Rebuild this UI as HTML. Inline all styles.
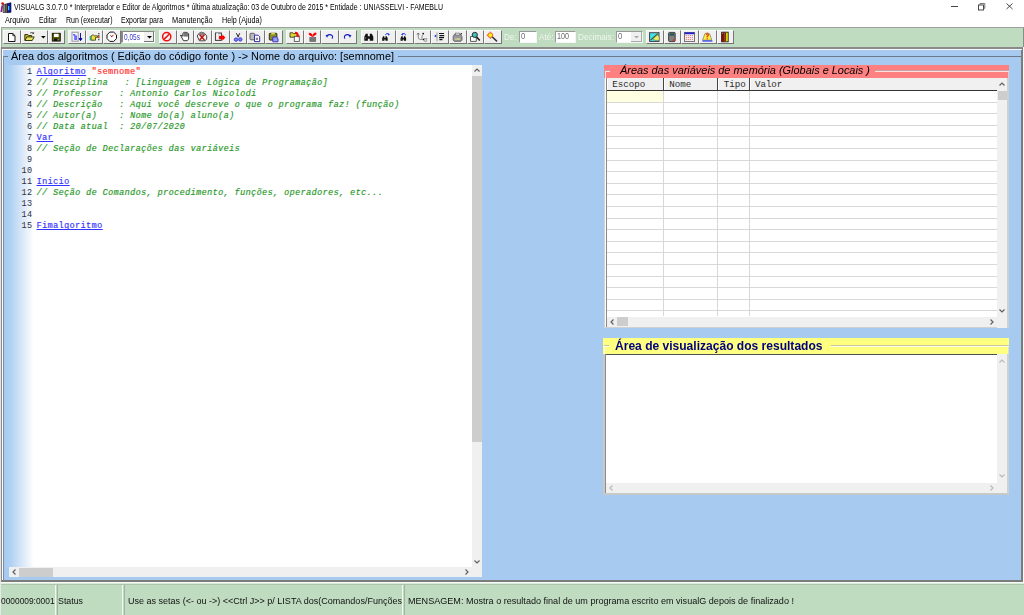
<!DOCTYPE html><html><head><meta charset="utf-8"><style>
html,body{margin:0;padding:0;width:1024px;height:615px;overflow:hidden;background:#fff;position:relative}
.t{position:absolute;white-space:pre;transform-origin:0 0}
.b{position:absolute;box-sizing:border-box}
svg{position:absolute;overflow:visible}
</style></head><body>
<svg style="left:0px;top:1px" width="12" height="12" viewBox="0 0 12 12">
<path d="M2.2 4.5L1.2 11" stroke="#901090" stroke-width="1.6"/><circle cx="2.6" cy="2.6" r="1.4" fill="#e01010"/>
<path d="M3 3.6l2.8-.5v8.4H3z" fill="#8a8a8a" stroke="#222" stroke-width=".6"/>
<path d="M5.6 3.1l1.8-.4v8.8H5.6z" fill="#807820" stroke="#222" stroke-width=".6"/>
<path d="M7.4 2.6l3.6-.9v9.6l-3.6.4z" fill="#1010c0" stroke="#111" stroke-width=".6"/><rect x="8.1" y="5" width="1.1" height="4.2" fill="#30f0ff"/>
</svg>
<div class="t" style="left:14px;top:2.60px;font-family:'Liberation Sans', sans-serif;font-size:8.5px;line-height:8.5px;color:#000;font-weight:normal;font-style:normal;transform:scaleX(0.8234165067178503);">VISUALG 3.0.7.0 * Interpretador e Editor de Algoritmos * última atualização: 03 de Outubro de 2015 * Entidade : UNIASSELVI - FAMEBLU</div>
<div class="b" style="left:951px;top:6px;width:6.5px;height:1px;background:#444"></div>
<svg style="left:977px;top:2px" width="10" height="8" viewBox="0 0 10 8"><rect x="1.5" y="3" width="5" height="5" fill="none" stroke="#333" stroke-width=".9"/><path d="M3 3V1.5h4.8v4.8H6.5" fill="none" stroke="#666" stroke-width=".9"/></svg>
<svg style="left:1006px;top:3px" width="8" height="7" viewBox="0 0 8 7"><path d="M0.5 0.5L6.5 6M6.5 0.5L0.5 6" stroke="#333" stroke-width=".9" fill="none"/></svg>
<div class="t" style="left:4.8px;top:15.50px;font-family:'Liberation Sans', sans-serif;font-size:8.5px;line-height:8.5px;color:#000;font-weight:normal;font-style:normal;transform:scaleX(0.8532778355879294);">Arquivo</div>
<div class="t" style="left:39px;top:15.50px;font-family:'Liberation Sans', sans-serif;font-size:8.5px;line-height:8.5px;color:#000;font-weight:normal;font-style:normal;transform:scaleX(0.7875787578757876);">Editar</div>
<div class="t" style="left:65.7px;top:15.50px;font-family:'Liberation Sans', sans-serif;font-size:8.5px;line-height:8.5px;color:#000;font-weight:normal;font-style:normal;transform:scaleX(0.8271077908217717);">Run (executar)</div>
<div class="t" style="left:121px;top:15.50px;font-family:'Liberation Sans', sans-serif;font-size:8.5px;line-height:8.5px;color:#000;font-weight:normal;font-style:normal;transform:scaleX(0.8174757281553399);">Exportar para</div>
<div class="t" style="left:172px;top:15.50px;font-family:'Liberation Sans', sans-serif;font-size:8.5px;line-height:8.5px;color:#000;font-weight:normal;font-style:normal;transform:scaleX(0.8696581196581198);">Manutenção</div>
<div class="t" style="left:222px;top:15.50px;font-family:'Liberation Sans', sans-serif;font-size:8.5px;line-height:8.5px;color:#000;font-weight:normal;font-style:normal;transform:scaleX(0.8444444444444444);">Help (Ajuda)</div>
<div class="b" style="left:1px;top:27px;width:1023px;height:20px;background:#c0dcc0;border-top:1px solid #a0a0a0;border-left:1px solid #a0a0a0;border-right:1px solid #8c8c8c"></div>
<div class="b" style="left:3px;top:30px;width:17.67px;height:14px;background:#f0f0f0;border-right:1px solid #777;border-bottom:1px solid #777;border-left:1px solid #fafafa;border-top:1px solid #fafafa"></div>
<div class="b" style="left:47.7px;top:30px;width:17.67px;height:14px;background:#f0f0f0;border-right:1px solid #777;border-bottom:1px solid #777;border-left:1px solid #fafafa;border-top:1px solid #fafafa"></div>
<div class="b" style="left:20.67px;top:30px;width:27px;height:14px;background:#f0f0f0;border-right:1px solid #777;border-bottom:1px solid #777;border-left:1px solid #fafafa;border-top:1px solid #fafafa"></div>
<div class="b" style="left:68.0px;top:30px;width:17.67px;height:14px;background:#f0f0f0;border-right:1px solid #777;border-bottom:1px solid #777;border-left:1px solid #fafafa;border-top:1px solid #fafafa"></div>
<div class="b" style="left:85.67px;top:30px;width:17.67px;height:14px;background:#f0f0f0;border-right:1px solid #777;border-bottom:1px solid #777;border-left:1px solid #fafafa;border-top:1px solid #fafafa"></div>
<div class="b" style="left:103.34px;top:30px;width:17.67px;height:14px;background:#f0f0f0;border-right:1px solid #777;border-bottom:1px solid #777;border-left:1px solid #fafafa;border-top:1px solid #fafafa"></div>
<div class="b" style="left:159.0px;top:30px;width:17.67px;height:14px;background:#f0f0f0;border-right:1px solid #777;border-bottom:1px solid #777;border-left:1px solid #fafafa;border-top:1px solid #fafafa"></div>
<div class="b" style="left:176.67000000000002px;top:30px;width:17.67px;height:14px;background:#f0f0f0;border-right:1px solid #777;border-bottom:1px solid #777;border-left:1px solid #fafafa;border-top:1px solid #fafafa"></div>
<div class="b" style="left:194.34px;top:30px;width:17.67px;height:14px;background:#f0f0f0;border-right:1px solid #777;border-bottom:1px solid #777;border-left:1px solid #fafafa;border-top:1px solid #fafafa"></div>
<div class="b" style="left:212.01px;top:30px;width:17.67px;height:14px;background:#f0f0f0;border-right:1px solid #777;border-bottom:1px solid #777;border-left:1px solid #fafafa;border-top:1px solid #fafafa"></div>
<div class="b" style="left:229.68px;top:30px;width:17.67px;height:14px;background:#f0f0f0;border-right:1px solid #777;border-bottom:1px solid #777;border-left:1px solid #fafafa;border-top:1px solid #fafafa"></div>
<div class="b" style="left:247.35000000000002px;top:30px;width:17.67px;height:14px;background:#f0f0f0;border-right:1px solid #777;border-bottom:1px solid #777;border-left:1px solid #fafafa;border-top:1px solid #fafafa"></div>
<div class="b" style="left:265.02px;top:30px;width:17.67px;height:14px;background:#f0f0f0;border-right:1px solid #777;border-bottom:1px solid #777;border-left:1px solid #fafafa;border-top:1px solid #fafafa"></div>
<div class="b" style="left:286.0px;top:30px;width:17.67px;height:14px;background:#f0f0f0;border-right:1px solid #777;border-bottom:1px solid #777;border-left:1px solid #fafafa;border-top:1px solid #fafafa"></div>
<div class="b" style="left:303.67px;top:30px;width:17.67px;height:14px;background:#f0f0f0;border-right:1px solid #777;border-bottom:1px solid #777;border-left:1px solid #fafafa;border-top:1px solid #fafafa"></div>
<div class="b" style="left:321.34000000000003px;top:30px;width:17.67px;height:14px;background:#f0f0f0;border-right:1px solid #777;border-bottom:1px solid #777;border-left:1px solid #fafafa;border-top:1px solid #fafafa"></div>
<div class="b" style="left:339.01px;top:30px;width:17.67px;height:14px;background:#f0f0f0;border-right:1px solid #777;border-bottom:1px solid #777;border-left:1px solid #fafafa;border-top:1px solid #fafafa"></div>
<div class="b" style="left:360.67px;top:30px;width:17.67px;height:14px;background:#f0f0f0;border-right:1px solid #777;border-bottom:1px solid #777;border-left:1px solid #fafafa;border-top:1px solid #fafafa"></div>
<div class="b" style="left:378.34000000000003px;top:30px;width:17.67px;height:14px;background:#f0f0f0;border-right:1px solid #777;border-bottom:1px solid #777;border-left:1px solid #fafafa;border-top:1px solid #fafafa"></div>
<div class="b" style="left:396.01px;top:30px;width:17.67px;height:14px;background:#f0f0f0;border-right:1px solid #777;border-bottom:1px solid #777;border-left:1px solid #fafafa;border-top:1px solid #fafafa"></div>
<div class="b" style="left:413.68px;top:30px;width:17.67px;height:14px;background:#f0f0f0;border-right:1px solid #777;border-bottom:1px solid #777;border-left:1px solid #fafafa;border-top:1px solid #fafafa"></div>
<div class="b" style="left:431.35px;top:30px;width:17.67px;height:14px;background:#f0f0f0;border-right:1px solid #777;border-bottom:1px solid #777;border-left:1px solid #fafafa;border-top:1px solid #fafafa"></div>
<div class="b" style="left:449.02000000000004px;top:30px;width:17.67px;height:14px;background:#f0f0f0;border-right:1px solid #777;border-bottom:1px solid #777;border-left:1px solid #fafafa;border-top:1px solid #fafafa"></div>
<div class="b" style="left:466.69000000000005px;top:30px;width:17.67px;height:14px;background:#f0f0f0;border-right:1px solid #777;border-bottom:1px solid #777;border-left:1px solid #fafafa;border-top:1px solid #fafafa"></div>
<div class="b" style="left:484.36px;top:30px;width:17.67px;height:14px;background:#f0f0f0;border-right:1px solid #777;border-bottom:1px solid #777;border-left:1px solid #fafafa;border-top:1px solid #fafafa"></div>
<div class="b" style="left:646.0px;top:30px;width:17.67px;height:14px;background:#f0f0f0;border-right:1px solid #777;border-bottom:1px solid #777;border-left:1px solid #fafafa;border-top:1px solid #fafafa"></div>
<div class="b" style="left:663.67px;top:30px;width:17.67px;height:14px;background:#f0f0f0;border-right:1px solid #777;border-bottom:1px solid #777;border-left:1px solid #fafafa;border-top:1px solid #fafafa"></div>
<div class="b" style="left:681.34px;top:30px;width:17.67px;height:14px;background:#f0f0f0;border-right:1px solid #777;border-bottom:1px solid #777;border-left:1px solid #fafafa;border-top:1px solid #fafafa"></div>
<div class="b" style="left:699.01px;top:30px;width:17.67px;height:14px;background:#f0f0f0;border-right:1px solid #777;border-bottom:1px solid #777;border-left:1px solid #fafafa;border-top:1px solid #fafafa"></div>
<div class="b" style="left:716.6800000000001px;top:30px;width:17.67px;height:14px;background:#f0f0f0;border-right:1px solid #777;border-bottom:1px solid #777;border-left:1px solid #fafafa;border-top:1px solid #fafafa"></div>
<svg style="left:3px;top:30px" width="17" height="13" viewBox="0 0 17 13"><path d="M5.5 3.5h4.3l2.2 2.2v5.8H5.5z" fill="#fff" stroke="#111" stroke-width="1"/><path d="M9.8 3.5v2.2H12" fill="none" stroke="#111" stroke-width=".8"/></svg>
<svg style="left:20.67px;top:30px" width="17" height="13" viewBox="0 0 17 13"><path d="M3.8 4.5h3l.8 1h3v4.8H3.8z" fill="#b8b030" stroke="#303000" stroke-width=".9"/><path d="M4 10.5l1.8-3.6h7.4l-2 3.6z" fill="#e8e060" stroke="#303000" stroke-width=".9"/><path d="M9 3.2q2-1.6 3.6.2M12.6 2.2v1.4h-1.3" stroke="#333" fill="none" stroke-width=".8"/></svg>
<svg style="left:40.8px;top:35.6px" width="6" height="3" viewBox="0 0 6 3"><path d="M0 0h4.6l-2.3 2.6z" fill="#000"/></svg>
<svg style="left:47.7px;top:30px" width="17" height="13" viewBox="0 0 17 13"><rect x="4.3" y="3.3" width="8" height="7.8" fill="#606000" stroke="#151500" stroke-width=".9"/><rect x="6" y="3.8" width="4.6" height="3.2" fill="#fff"/><rect x="6" y="8.4" width="4.8" height="2.6" fill="#111"/><rect x="9.6" y="8.8" width="1" height="1.6" fill="#bbb"/></svg>
<svg style="left:68px;top:30px" width="17" height="13" viewBox="0 0 17 13"><rect x="4" y="2.2" width="6.2" height="9" fill="#f4f4ff" stroke="#999" stroke-width="1"/><path d="M5 4h2l.6 1.6h1.4v4.4H6.2V6.2L5 5z" fill="#6a6aff"/><path d="M12.5 3v7.3M11 8.6l1.5 2 1.5-2z" stroke="#0000a0" fill="#0000a0" stroke-width=".9"/></svg>
<svg style="left:85.67px;top:30px" width="17" height="13" viewBox="0 0 17 13"><rect x="3.4" y="6" width="1.6" height="4.4" fill="#40e0f0"/><path d="M5 6l1.5-1h1.2l.8.8h3v1.6H9.5v2.8H5z" fill="#e8e040" stroke="#202000" stroke-width=".7"/><path d="M12.8 3v8" stroke="#222" stroke-width="1.1" stroke-dasharray="1.2 .8"/><circle cx="12.8" cy="6.8" r=".9" fill="#ff4040"/></svg>
<svg style="left:103.33px;top:30px" width="17" height="13" viewBox="0 0 17 13"><path d="M6.8 2.1h3.9l2.8 2.8v3.7l-2.8 2.8H6.8L4 8.6V4.9z" fill="#fff" stroke="#111" stroke-width="1"/><path d="M8.8 6.5l1.8-1.8" stroke="#e00" stroke-width="1"/><path d="M8.8 6.5L7 4.9" stroke="#444" stroke-width=".7"/><circle cx="8.8" cy="6.6" r=".7" fill="#a00"/></svg>
<div class="b" style="left:121px;top:31px;width:34px;height:12px;background:#fff;border-top:1px solid #888;border-left:2px solid #888;border-right:1px solid #fff;border-bottom:1px solid #fff"></div>
<div class="b" style="left:144px;top:32px;width:10px;height:10px;background:#f0f0f0;border-right:1px solid #777;border-bottom:1px solid #777"></div>
<svg style="left:147px;top:36px" width="5" height="3" viewBox="0 0 5 3"><path d="M0 0h5l-2.5 2.5z" fill="#000"/></svg>
<div class="t" style="left:124px;top:32.16px;font-family:'Liberation Sans', sans-serif;font-size:9.5px;line-height:9.5px;color:#3838c0;font-weight:normal;font-style:normal;transform:scaleX(0.6837565998518765);">0,05s</div>
<svg style="left:159px;top:30px" width="17" height="13" viewBox="0 0 17 13"><circle cx="7.7" cy="6.7" r="4.1" fill="none" stroke="#f01010" stroke-width="1.5"/><path d="M5 9.4l5.4-5.4" stroke="#f01010" stroke-width="1.5"/></svg>
<svg style="left:176.67px;top:30px" width="17" height="13" viewBox="0 0 17 13"><path d="M3.5 5.2l2.3.9V3.4l1.3-1h3l1.5 1.5v5.3l-1.4 1.5H6.5z" fill="#fff" stroke="#222" stroke-width=".9"/><rect x="6.4" y="2.6" width="4.6" height="4" fill="#777"/></svg>
<svg style="left:194.33px;top:30px" width="17" height="13" viewBox="0 0 17 13"><path d="M3.2 6l2-2.8 2.4-1 2.8 1 2.3 2.6v3.2l-1.6 1.8H5.4z" fill="#f4f4f4" stroke="#333" stroke-width=".9"/><rect x="6" y="2.6" width="4" height="3" fill="#888"/><path d="M5.4 4.6l5 5.4M10.6 4.6l-5 5.4" stroke="#c01010" stroke-width="1.4"/></svg>
<svg style="left:212px;top:30px" width="17" height="13" viewBox="0 0 17 13"><rect x="3.4" y="3" width="6" height="7.4" fill="#ddd" stroke="#333" stroke-width=".9"/><rect x="4.6" y="3" width="1.2" height="6" fill="#fff"/><path d="M7 6h3.4V4.4l3 3.2-3 3.2V9.2H7z" fill="#f00"/></svg>
<svg style="left:229.67px;top:30px" width="17" height="13" viewBox="0 0 17 13"><path d="M6.3 3.2l2.2 4M9.8 3.2l-2 4" stroke="#222" stroke-width="1"/><circle cx="6" cy="9.6" r="1.7" fill="#8080ff" stroke="#3030c0" stroke-width=".9"/><circle cx="10.3" cy="9.4" r="1.7" fill="#8080ff" stroke="#3030c0" stroke-width=".9"/></svg>
<svg style="left:247.33px;top:30px" width="17" height="13" viewBox="0 0 17 13"><rect x="3" y="3.3" width="4.6" height="6.5" rx="1" fill="#bbb" stroke="#555" stroke-width=".9"/><path d="M7.5 5.2h3.6l1.6 1.6v4.8H7.5z" fill="#fff" stroke="#3030b0" stroke-width="1"/><rect x="8.8" y="7.6" width="2.2" height="2.4" fill="#888"/></svg>
<svg style="left:265px;top:30px" width="17" height="13" viewBox="0 0 17 13"><rect x="4.3" y="3.3" width="7.6" height="6.8" rx=".8" fill="#8a8a30" stroke="#202000" stroke-width=".9"/><rect x="6.2" y="2.8" width="3.6" height="1.6" fill="#e0e040"/><path d="M7.8 7h3.6l1.6 1.6v3.2H7.8z" fill="#9a9aff" stroke="#3030b0" stroke-width=".9"/></svg>
<svg style="left:286px;top:30px" width="17" height="13" viewBox="0 0 17 13"><path d="M4 2.8h3l.6.8h3.4v3.6H4z" fill="#d8d840" stroke="#303000" stroke-width=".8"/><rect x="8.3" y="6.4" width="5" height="5" fill="#fff" stroke="#555" stroke-width=".9"/><path d="M9 2.6q3 .2 3 3" stroke="#f00" stroke-width="1.5" fill="none"/><path d="M10.4 5.2l1.7 2.4 1.7-2.4z" fill="#f00"/></svg>
<svg style="left:303.67px;top:30px" width="17" height="13" viewBox="0 0 17 13"><rect x="5.8" y="7.4" width="6" height="4.2" fill="#777" stroke="#555" stroke-width=".5"/><ellipse cx="6.6" cy="4.6" rx="2.2" ry="1.3" transform="rotate(40 6.6 4.6)" fill="#f00"/><ellipse cx="10.6" cy="4.2" rx="2.2" ry="1.3" transform="rotate(-35 10.6 4.2)" fill="#f00"/><path d="M8.2 6.8l.6-1.2.6 1.2" fill="#f00" stroke="#f00" stroke-width=".8"/></svg>
<svg style="left:321.33px;top:30px" width="17" height="13" viewBox="0 0 17 13"><path d="M6.2 5.6q2.5-2 5 0 1 1.5-.2 3.2" stroke="#1020c0" stroke-width="1.1" fill="none"/><path d="M4.5 5.2l3.2-.6-1.6 3.2z" fill="#1020c0"/></svg>
<svg style="left:339px;top:30px" width="17" height="13" viewBox="0 0 17 13"><path d="M10.8 5.6q-2.5-2-5 0-1 1.5.2 3.2" stroke="#1020c0" stroke-width="1.1" fill="none"/><path d="M12.5 5.2l-3.2-.6 1.6 3.2z" fill="#1020c0"/></svg>
<svg style="left:360.67px;top:30px" width="17" height="13" viewBox="0 0 17 13"><g transform="translate(1.8 3.2) scale(1.0)"><path d="M1.5 3.5l1.5-3h2v2.5h2V.5h2l1.5 3v4h-3.6V5.5H5.1v2H1.5z" fill="#111"/><rect x="2.2" y="4" width="1.2" height="1.6" fill="#666"/></g></svg>
<svg style="left:378.33px;top:30px" width="17" height="13" viewBox="0 0 17 13"><g transform="translate(3.2 6.0) scale(0.62)"><path d="M1.5 3.5l1.5-3h2v2.5h2V.5h2l1.5 3v4h-3.6V5.5H5.1v2H1.5z" fill="#111"/><rect x="2.2" y="4" width="1.2" height="1.6" fill="#666"/></g><path d="M7.2 5q1.5-2.6 3.8-.8" stroke="#1030e0" stroke-width="1" fill="none"/><path d="M10.2 3.2l1.8 1.6-2 .6z" fill="#1030e0"/></svg>
<svg style="left:396px;top:30px" width="17" height="13" viewBox="0 0 17 13"><g transform="translate(3.6 6.0) scale(0.62)"><path d="M1.5 3.5l1.5-3h2v2.5h2V.5h2l1.5 3v4h-3.6V5.5H5.1v2H1.5z" fill="#111"/><rect x="2.2" y="4" width="1.2" height="1.6" fill="#666"/></g><path d="M9.8 5q-1.5-2.6-3.8-.8" stroke="#1030e0" stroke-width="1" fill="none"/><path d="M6.8 3.2l-1.8 1.6 2 .6z" fill="#1030e0"/></svg>
<svg style="left:413.67px;top:30px" width="17" height="13" viewBox="0 0 17 13"><path d="M4.2 6.5V3.2M3 4.4l1.2-1.4 1.2 1.4" stroke="#555" stroke-width=".8" fill="none"/><circle cx="9.2" cy="3.6" r=".9" fill="#111"/><path d="M9 4.5l-1 1.5v3M4.2 6.5q0 3 2 3h3" stroke="#666" stroke-width=".7" fill="none"/><path d="M9 8.2l1.4 1.3-1.4 1.3z" fill="#111"/><rect x="10.5" y="8.3" width="2.4" height="3" fill="#ccc" stroke="#888" stroke-width=".5"/></svg>
<svg style="left:431.33px;top:30px" width="17" height="13" viewBox="0 0 17 13"><path d="M8 3.5h5M8.4 5.6h4.8M8 7.6h5M8.4 9.6h3" stroke="#111" stroke-width="1.2"/><path d="M6 2.5v9" stroke="#999" stroke-width="1"/><path d="M3.2 6l2-1.5v3z" fill="#1030e0"/></svg>
<svg style="left:449px;top:30px" width="17" height="13" viewBox="0 0 17 13"><path d="M4.2 6.5l1.5-2.5h5.5l1.8 2.5v3.6l-1 1.2H5.2l-1-1.2z" fill="#999" stroke="#555" stroke-width=".8"/><rect x="6.5" y="3" width="4" height="2.2" fill="#ccc" stroke="#666" stroke-width=".5"/><rect x="5.5" y="8.2" width="6" height="1.8" fill="#bbb"/><rect x="8.2" y="8.5" width="2" height="1.2" fill="#f0e020"/><circle cx="12.3" cy="3.8" r=".7" fill="#111"/></svg>
<svg style="left:466.67px;top:30px" width="17" height="13" viewBox="0 0 17 13"><path d="M3.5 6.5h4.2l1.6 1.6v3.3H3.5z" fill="#fff" stroke="#333" stroke-width=".8"/><circle cx="7.8" cy="4.9" r="2.6" fill="#40c0c0" stroke="#222" stroke-width=".9"/><path d="M9.6 6.9l3.2 3.5" stroke="#111" stroke-width="1.5"/></svg>
<svg style="left:484.33px;top:30px" width="17" height="13" viewBox="0 0 17 13"><path d="M7.6 6.2l5.4 5.2" stroke="#333" stroke-width="1.5"/><circle cx="6.3" cy="5.2" r="2.4" fill="#f8f020" stroke="#f04010" stroke-width=".8"/><path d="M6.3 1.6v1.2M2.8 5.2H4M6.3 7.6v1.4" stroke="#f04010" stroke-width=".8"/></svg>
<div class="t" style="left:504px;top:32.58px;font-family:'Liberation Sans', sans-serif;font-size:9px;line-height:9px;color:#eef6ee;font-weight:normal;font-style:normal;transform:scaleX(0.891583452211127);">De:</div>
<div class="t" style="left:539px;top:32.58px;font-family:'Liberation Sans', sans-serif;font-size:9px;line-height:9px;color:#eef6ee;font-weight:normal;font-style:normal;transform:scaleX(0.9051186017478152);">Até:</div>
<div class="t" style="left:578px;top:32.58px;font-family:'Liberation Sans', sans-serif;font-size:9px;line-height:9px;color:#eef6ee;font-weight:normal;font-style:normal;transform:scaleX(0.9109311740890688);">Decimais:</div>
<div class="b" style="left:519px;top:31px;width:18px;height:12px;background:#fff;border-top:1px solid #999;border-left:1px solid #999;border-right:1px solid #f5f5f5;border-bottom:1px solid #f5f5f5"></div>
<div class="t" style="left:520.5px;top:32.38px;font-family:'Liberation Sans', sans-serif;font-size:9px;line-height:9px;color:#6a6a6a;font-weight:normal;font-style:normal;transform:scaleX(0.85);">0</div>
<div class="b" style="left:555px;top:31px;width:20.5px;height:12px;background:#fff;border-top:1px solid #999;border-left:1px solid #999;border-right:1px solid #f5f5f5;border-bottom:1px solid #f5f5f5"></div>
<div class="t" style="left:556.5px;top:32.38px;font-family:'Liberation Sans', sans-serif;font-size:9px;line-height:9px;color:#6a6a6a;font-weight:normal;font-style:normal;transform:scaleX(0.8);">100</div>
<div class="b" style="left:616px;top:31px;width:26.5px;height:12px;background:#fff;border-top:1px solid #999;border-left:1px solid #999;border-right:1px solid #f5f5f5;border-bottom:1px solid #f5f5f5"></div>
<div class="b" style="left:631px;top:32px;width:10.5px;height:10px;background:#f0f0f0;border-right:1px solid #aaa;border-bottom:1px solid #aaa"></div>
<svg style="left:634px;top:36px" width="5" height="3" viewBox="0 0 5 3"><path d="M0 0h5l-2.5 2.5z" fill="#aaa"/></svg>
<div class="t" style="left:618px;top:32.38px;font-family:'Liberation Sans', sans-serif;font-size:9px;line-height:9px;color:#6a6a6a;font-weight:normal;font-style:normal;transform:scaleX(0.85);">0</div>
<svg style="left:646px;top:30px" width="17" height="13" viewBox="0 0 17 13"><rect x="3.6" y="2.6" width="9.4" height="8.8" fill="#40e0f0" stroke="#333" stroke-width=".9"/><path d="M4.6 10.2l7.2-6.6" stroke="#505000" stroke-width="1.1"/><path d="M7.4 8.6l4.2-3.8 1.6 2.2v3.4H8.8z" fill="#f0f060" stroke="#555" stroke-width=".5"/><path d="M4 2.8h8" stroke="#777" stroke-width=".8"/></svg>
<svg style="left:663.67px;top:30px" width="17" height="13" viewBox="0 0 17 13"><rect x="4.6" y="2.4" width="6.6" height="9.2" rx="1" fill="#808080" stroke="#222" stroke-width=".8"/><rect x="5.6" y="3.4" width="4.6" height="2.2" fill="#205858"/><rect x="8.4" y="9.6" width="2" height="1.1" fill="#f02020"/></svg>
<svg style="left:681.33px;top:30px" width="17" height="13" viewBox="0 0 17 13"><rect x="3.6" y="2.4" width="9.8" height="9.2" fill="#f4f4f4" stroke="#555" stroke-width=".8"/><rect x="3.6" y="2.4" width="9.8" height="1.8" fill="#2020d0"/><path d="M4.8 5.6h7.4M4.8 7.6h7.4M4.8 9.6h7.4" stroke="#e06060" stroke-width="1" stroke-dasharray="1 1"/></svg>
<svg style="left:699px;top:30px" width="17" height="13" viewBox="0 0 17 13"><path d="M3.6 10.2l2.2-6.4q2.4-2 4.8 0l2.2 6.4z" fill="#f8f040" stroke="#777" stroke-width=".7"/><path d="M3.4 11h10" stroke="#2040f0" stroke-width="1.2"/><path d="M7 4.6q1.3-1.4 2.5 0 0 1.4-1.3 1.8v1.2" stroke="#f03010" stroke-width="1.2" fill="none"/><rect x="7.7" y="8.2" width="1.2" height="1.1" fill="#f03010"/></svg>
<svg style="left:716.67px;top:30px" width="17" height="13" viewBox="0 0 17 13"><rect x="4.6" y="2.2" width="6.6" height="9.6" fill="#f8f000" stroke="#222" stroke-width=".9"/><path d="M4.6 2.2h3v9.6h-3z" fill="#801010"/><path d="M7.6 2.2l1.2.8v7.4l-1.2 1.4" fill="#801010" stroke="#222" stroke-width=".5"/><rect x="5.2" y="2.8" width="1" height="1" fill="#20d0d0"/></svg>
<div class="b" style="left:0px;top:47px;width:1024px;height:537px;background:#e3e3e3"></div>
<div class="b" style="left:1px;top:47px;width:1022px;height:535px;background:#a6caf0;border-top:2px solid #8a8a8a;border-left:1px solid #8a8a8a;border-right:2px solid #7c7c7c;border-bottom:2px solid #7c7c7c"></div>
<div class="b" style="left:2px;top:49px;width:1020px;height:1px;background:#f4f8fc"></div>
<div class="b" style="left:2px;top:49px;width:1px;height:531px;background:#ffffff"></div>
<div class="b" style="left:1023px;top:47px;width:1px;height:537px;background:#f6f6f6"></div>
<div class="b" style="left:3px;top:56px;width:5px;height:1px;background:#6d7886"></div>
<div class="b" style="left:398px;top:56px;width:623px;height:1px;background:#6d7886"></div>
<div class="b" style="left:3px;top:56px;width:1px;height:524px;background:#7b8ca0"></div>
<div class="t" style="left:11px;top:50.99px;font-family:'Liberation Sans', sans-serif;font-size:11px;line-height:11px;color:#000;font-weight:normal;font-style:normal;transform:scaleX(0.9903550280557495);">Área dos algoritmos ( Edição do código fonte ) -&gt; Nome do arquivo: [semnome]</div>
<div class="b" style="left:4px;top:65px;width:478px;height:502px;background:linear-gradient(to right,#a6caf0 0px,#aed0f2 6px,#d8e7f8 18px,#ffffff 30px)"></div>
<div class="b" style="left:472px;top:65px;width:10px;height:512px;background:#f0f0f0"></div>
<div class="b" style="left:472px;top:76px;width:9.5px;height:366px;background:#cdcdcd"></div>
<svg style="left:474px;top:68px" width="6" height="4" viewBox="0 0 6 4"><path d="M0.5 3.5L3 1l2.5 2.5" stroke="#606060" stroke-width="1.2" fill="none"/></svg>
<svg style="left:474px;top:560px" width="6" height="4" viewBox="0 0 6 4"><path d="M0.5 0.5L3 3l2.5-2.5" stroke="#606060" stroke-width="1.2" fill="none"/></svg>
<div class="b" style="left:9px;top:567px;width:473px;height:10px;background:#f0f0f0"></div>
<div class="b" style="left:19px;top:568px;width:34px;height:8.5px;background:#cdcdcd"></div>
<svg style="left:12px;top:568.8px" width="4" height="6" viewBox="0 0 4 6"><path d="M3.5 0.5L1 3l2.5 2.5" stroke="#606060" stroke-width="1.2" fill="none"/></svg>
<svg style="left:465px;top:568.8px" width="4" height="6" viewBox="0 0 4 6"><path d="M0.5 0.5L3 3l-2.5 2.5" stroke="#606060" stroke-width="1.2" fill="none"/></svg>
<div class="t" style="left:27.0px;top:67.89px;font-family:'Liberation Mono', monospace;font-size:8.5px;line-height:8.5px;color:#303040;font-weight:normal;font-style:normal;letter-spacing:0.400px;">1</div>
<div class="t" style="left:36.5px;top:67.89px;font-family:'Liberation Mono', monospace;font-size:8.5px;line-height:8.5px;color:#3434ff;font-weight:normal;font-style:normal;letter-spacing:0.400px;text-shadow:0.4px 0 0 rgba(52,52,255,.45);text-decoration:underline;text-underline-offset:0.9px;text-decoration-skip-ink:none;">Algoritmo</div>
<div class="t" style="left:86.0px;top:67.89px;font-family:'Liberation Mono', monospace;font-size:8.5px;line-height:8.5px;color:#000;font-weight:normal;font-style:normal;letter-spacing:0.400px;"> </div>
<div class="t" style="left:91.5px;top:67.89px;font-family:'Liberation Mono', monospace;font-size:8.5px;line-height:8.5px;color:#ff2a2a;font-weight:normal;font-style:normal;letter-spacing:0.400px;text-shadow:0.4px 0 0 rgba(255,42,42,.45);">&quot;semnome&quot;</div>
<div class="t" style="left:27.0px;top:78.89px;font-family:'Liberation Mono', monospace;font-size:8.5px;line-height:8.5px;color:#303040;font-weight:normal;font-style:normal;letter-spacing:0.400px;">2</div>
<div class="t" style="left:36.5px;top:78.89px;font-family:'Liberation Mono', monospace;font-size:8.5px;line-height:8.5px;color:#2a982a;font-weight:normal;font-style:italic;letter-spacing:0.400px;text-shadow:0.4px 0 0 rgba(42,152,42,.45);">// Disciplina   : [Linguagem e Lógica de Programação]</div>
<div class="t" style="left:27.0px;top:89.89px;font-family:'Liberation Mono', monospace;font-size:8.5px;line-height:8.5px;color:#303040;font-weight:normal;font-style:normal;letter-spacing:0.400px;">3</div>
<div class="t" style="left:36.5px;top:89.89px;font-family:'Liberation Mono', monospace;font-size:8.5px;line-height:8.5px;color:#2a982a;font-weight:normal;font-style:italic;letter-spacing:0.400px;text-shadow:0.4px 0 0 rgba(42,152,42,.45);">// Professor   : Antonio Carlos Nicolodi</div>
<div class="t" style="left:27.0px;top:100.89px;font-family:'Liberation Mono', monospace;font-size:8.5px;line-height:8.5px;color:#303040;font-weight:normal;font-style:normal;letter-spacing:0.400px;">4</div>
<div class="t" style="left:36.5px;top:100.89px;font-family:'Liberation Mono', monospace;font-size:8.5px;line-height:8.5px;color:#2a982a;font-weight:normal;font-style:italic;letter-spacing:0.400px;text-shadow:0.4px 0 0 rgba(42,152,42,.45);">// Descrição   : Aqui você descreve o que o programa faz! (função)</div>
<div class="t" style="left:27.0px;top:111.89px;font-family:'Liberation Mono', monospace;font-size:8.5px;line-height:8.5px;color:#303040;font-weight:normal;font-style:normal;letter-spacing:0.400px;">5</div>
<div class="t" style="left:36.5px;top:111.89px;font-family:'Liberation Mono', monospace;font-size:8.5px;line-height:8.5px;color:#2a982a;font-weight:normal;font-style:italic;letter-spacing:0.400px;text-shadow:0.4px 0 0 rgba(42,152,42,.45);">// Autor(a)    : Nome do(a) aluno(a)</div>
<div class="t" style="left:27.0px;top:122.89px;font-family:'Liberation Mono', monospace;font-size:8.5px;line-height:8.5px;color:#303040;font-weight:normal;font-style:normal;letter-spacing:0.400px;">6</div>
<div class="t" style="left:36.5px;top:122.89px;font-family:'Liberation Mono', monospace;font-size:8.5px;line-height:8.5px;color:#2a982a;font-weight:normal;font-style:italic;letter-spacing:0.400px;text-shadow:0.4px 0 0 rgba(42,152,42,.45);">// Data atual  : 20/07/2020</div>
<div class="t" style="left:27.0px;top:133.89px;font-family:'Liberation Mono', monospace;font-size:8.5px;line-height:8.5px;color:#303040;font-weight:normal;font-style:normal;letter-spacing:0.400px;">7</div>
<div class="t" style="left:36.5px;top:133.89px;font-family:'Liberation Mono', monospace;font-size:8.5px;line-height:8.5px;color:#3434ff;font-weight:normal;font-style:normal;letter-spacing:0.400px;text-shadow:0.4px 0 0 rgba(52,52,255,.45);text-decoration:underline;text-underline-offset:0.9px;text-decoration-skip-ink:none;">Var</div>
<div class="t" style="left:27.0px;top:144.89px;font-family:'Liberation Mono', monospace;font-size:8.5px;line-height:8.5px;color:#303040;font-weight:normal;font-style:normal;letter-spacing:0.400px;">8</div>
<div class="t" style="left:36.5px;top:144.89px;font-family:'Liberation Mono', monospace;font-size:8.5px;line-height:8.5px;color:#2a982a;font-weight:normal;font-style:italic;letter-spacing:0.400px;text-shadow:0.4px 0 0 rgba(42,152,42,.45);">// Seção de Declarações das variáveis</div>
<div class="t" style="left:27.0px;top:155.89px;font-family:'Liberation Mono', monospace;font-size:8.5px;line-height:8.5px;color:#303040;font-weight:normal;font-style:normal;letter-spacing:0.400px;">9</div>
<div class="t" style="left:21.5px;top:166.89px;font-family:'Liberation Mono', monospace;font-size:8.5px;line-height:8.5px;color:#303040;font-weight:normal;font-style:normal;letter-spacing:0.400px;">10</div>
<div class="t" style="left:21.5px;top:177.89px;font-family:'Liberation Mono', monospace;font-size:8.5px;line-height:8.5px;color:#303040;font-weight:normal;font-style:normal;letter-spacing:0.400px;">11</div>
<div class="t" style="left:36.5px;top:177.89px;font-family:'Liberation Mono', monospace;font-size:8.5px;line-height:8.5px;color:#3434ff;font-weight:normal;font-style:normal;letter-spacing:0.400px;text-shadow:0.4px 0 0 rgba(52,52,255,.45);text-decoration:underline;text-underline-offset:0.9px;text-decoration-skip-ink:none;">Inicio</div>
<div class="t" style="left:21.5px;top:188.89px;font-family:'Liberation Mono', monospace;font-size:8.5px;line-height:8.5px;color:#303040;font-weight:normal;font-style:normal;letter-spacing:0.400px;">12</div>
<div class="t" style="left:36.5px;top:188.89px;font-family:'Liberation Mono', monospace;font-size:8.5px;line-height:8.5px;color:#2a982a;font-weight:normal;font-style:italic;letter-spacing:0.400px;text-shadow:0.4px 0 0 rgba(42,152,42,.45);">// Seção de Comandos, procedimento, funções, operadores, etc...</div>
<div class="t" style="left:21.5px;top:199.89px;font-family:'Liberation Mono', monospace;font-size:8.5px;line-height:8.5px;color:#303040;font-weight:normal;font-style:normal;letter-spacing:0.400px;">13</div>
<div class="t" style="left:21.5px;top:210.89px;font-family:'Liberation Mono', monospace;font-size:8.5px;line-height:8.5px;color:#303040;font-weight:normal;font-style:normal;letter-spacing:0.400px;">14</div>
<div class="t" style="left:21.5px;top:221.89px;font-family:'Liberation Mono', monospace;font-size:8.5px;line-height:8.5px;color:#303040;font-weight:normal;font-style:normal;letter-spacing:0.400px;">15</div>
<div class="t" style="left:36.5px;top:221.89px;font-family:'Liberation Mono', monospace;font-size:8.5px;line-height:8.5px;color:#3434ff;font-weight:normal;font-style:normal;letter-spacing:0.400px;text-shadow:0.4px 0 0 rgba(52,52,255,.45);text-decoration:underline;text-underline-offset:0.9px;text-decoration-skip-ink:none;">Fimalgoritmo</div>
<div class="b" style="left:604px;top:65px;width:405px;height:13px;background:#ff8080"></div>
<div class="b" style="left:875px;top:70px;width:134px;height:1px;background:#c8a0a0"></div>
<div class="b" style="left:875px;top:71px;width:134px;height:1px;background:#ffe0e0"></div>
<div class="b" style="left:605px;top:70px;width:5px;height:1px;background:#c8a0a0"></div>
<div class="b" style="left:605px;top:71px;width:5px;height:1px;background:#ffe0e0"></div>
<div class="b" style="left:605px;top:71px;width:1px;height:7px;background:#ffe0e0"></div>
<div class="b" style="left:1008px;top:72px;width:1px;height:6px;background:#e0c8c8"></div>
<div class="t" style="left:620px;top:65.19px;font-family:'Liberation Sans', sans-serif;font-size:11px;line-height:11px;color:#000;font-weight:normal;font-style:italic;transform:scaleX(0.9924967247608083);">Áreas das variáveis de memória (Globais e Locais )</div>
<div class="b" style="left:604px;top:78px;width:405px;height:250px;background:#f0f0f0;border-left:1px solid #d4d4d4;border-right:2px solid #d0d0d0;border-bottom:1px solid #d0d0d0"></div>
<div class="b" style="left:605px;top:78px;width:1px;height:249px;background:#fcfcfc"></div>
<div class="b" style="left:606px;top:78px;width:1px;height:249px;background:#8a8a8a"></div>
<div class="b" style="left:607px;top:78px;width:390px;height:12px;background:#f0f0f0"></div>
<div class="b" style="left:607px;top:90px;width:390px;height:1px;background:#333"></div>
<div class="b" style="left:663px;top:78px;width:1px;height:12px;background:#444"></div>
<div class="b" style="left:664px;top:79px;width:1px;height:11px;background:#fff"></div>
<div class="b" style="left:717px;top:78px;width:1px;height:12px;background:#444"></div>
<div class="b" style="left:718px;top:79px;width:1px;height:11px;background:#fff"></div>
<div class="b" style="left:749px;top:78px;width:1px;height:12px;background:#444"></div>
<div class="b" style="left:750px;top:79px;width:1px;height:11px;background:#fff"></div>
<div class="b" style="left:607px;top:79px;width:1px;height:11px;background:#fff"></div>
<div class="b" style="left:607px;top:91px;width:390px;height:225.5px;background:#fff"></div>
<div class="b" style="left:607px;top:91px;width:56px;height:10.6px;background:#ffffe1"></div>
<div class="b" style="left:607px;top:101.60px;width:390px;height:1px;background:#d8d8d8"></div>
<div class="b" style="left:607px;top:113.20px;width:390px;height:1px;background:#d8d8d8"></div>
<div class="b" style="left:607px;top:124.80px;width:390px;height:1px;background:#d8d8d8"></div>
<div class="b" style="left:607px;top:136.40px;width:390px;height:1px;background:#d8d8d8"></div>
<div class="b" style="left:607px;top:148.00px;width:390px;height:1px;background:#d8d8d8"></div>
<div class="b" style="left:607px;top:159.60px;width:390px;height:1px;background:#d8d8d8"></div>
<div class="b" style="left:607px;top:171.20px;width:390px;height:1px;background:#d8d8d8"></div>
<div class="b" style="left:607px;top:182.80px;width:390px;height:1px;background:#d8d8d8"></div>
<div class="b" style="left:607px;top:194.40px;width:390px;height:1px;background:#d8d8d8"></div>
<div class="b" style="left:607px;top:206.00px;width:390px;height:1px;background:#d8d8d8"></div>
<div class="b" style="left:607px;top:217.60px;width:390px;height:1px;background:#d8d8d8"></div>
<div class="b" style="left:607px;top:229.20px;width:390px;height:1px;background:#d8d8d8"></div>
<div class="b" style="left:607px;top:240.80px;width:390px;height:1px;background:#d8d8d8"></div>
<div class="b" style="left:607px;top:252.40px;width:390px;height:1px;background:#d8d8d8"></div>
<div class="b" style="left:607px;top:264.00px;width:390px;height:1px;background:#d8d8d8"></div>
<div class="b" style="left:607px;top:275.60px;width:390px;height:1px;background:#d8d8d8"></div>
<div class="b" style="left:607px;top:287.20px;width:390px;height:1px;background:#d8d8d8"></div>
<div class="b" style="left:607px;top:298.80px;width:390px;height:1px;background:#d8d8d8"></div>
<div class="b" style="left:607px;top:310.40px;width:390px;height:1px;background:#d8d8d8"></div>
<div class="b" style="left:663px;top:91px;width:1px;height:225px;background:#d8d8d8"></div>
<div class="b" style="left:717px;top:91px;width:1px;height:225px;background:#d8d8d8"></div>
<div class="b" style="left:749px;top:91px;width:1px;height:225px;background:#d8d8d8"></div>
<div class="t" style="left:612.3px;top:80.38px;font-family:'Liberation Mono', monospace;font-size:9.166666666666668px;line-height:9.166666666666668px;color:#2a2a2a;font-weight:normal;font-style:normal;">Escopo</div>
<div class="t" style="left:669.2px;top:80.38px;font-family:'Liberation Mono', monospace;font-size:9.166666666666668px;line-height:9.166666666666668px;color:#2a2a2a;font-weight:normal;font-style:normal;">Nome</div>
<div class="t" style="left:723.8px;top:80.38px;font-family:'Liberation Mono', monospace;font-size:9.166666666666668px;line-height:9.166666666666668px;color:#2a2a2a;font-weight:normal;font-style:normal;">Tipo</div>
<div class="t" style="left:754.9px;top:80.38px;font-family:'Liberation Mono', monospace;font-size:9.166666666666668px;line-height:9.166666666666668px;color:#2a2a2a;font-weight:normal;font-style:normal;">Valor</div>
<div class="b" style="left:997px;top:79px;width:10px;height:249px;background:#f0f0f0"></div>
<div class="b" style="left:997.5px;top:90.5px;width:9px;height:9.5px;background:#cdcdcd"></div>
<svg style="left:999px;top:82px" width="6" height="4" viewBox="0 0 6 4"><path d="M0.5 3.5L3 1l2.5 2.5" stroke="#606060" stroke-width="1.2" fill="none"/></svg>
<svg style="left:999px;top:309px" width="6" height="4" viewBox="0 0 6 4"><path d="M0.5 0.5L3 3l2.5-2.5" stroke="#606060" stroke-width="1.2" fill="none"/></svg>
<div class="b" style="left:607px;top:316.5px;width:390px;height:10.5px;background:#f0f0f0"></div>
<div class="b" style="left:617px;top:317px;width:10.5px;height:9px;background:#cdcdcd"></div>
<svg style="left:610px;top:318.5px" width="4" height="6" viewBox="0 0 4 6"><path d="M3.5 0.5L1 3l2.5 2.5" stroke="#606060" stroke-width="1.2" fill="none"/></svg>
<svg style="left:990px;top:318.5px" width="4" height="6" viewBox="0 0 4 6"><path d="M0.5 0.5L3 3l-2.5 2.5" stroke="#606060" stroke-width="1.2" fill="none"/></svg>
<div class="b" style="left:603px;top:338px;width:406px;height:16px;background:#ffff80"></div>
<div class="b" style="left:831px;top:345px;width:178px;height:1px;background:#c8c8a0"></div>
<div class="b" style="left:831px;top:346px;width:178px;height:1px;background:#ffffe0"></div>
<div class="b" style="left:604px;top:345px;width:5px;height:1px;background:#c8c8a0"></div>
<div class="b" style="left:604px;top:346px;width:5px;height:1px;background:#ffffe0"></div>
<div class="b" style="left:604px;top:346px;width:1px;height:8px;background:#ffffe0"></div>
<div class="b" style="left:1008px;top:347px;width:1px;height:7px;background:#e0e0c0"></div>
<div class="t" style="left:615px;top:339.62px;font-family:'Liberation Sans', sans-serif;font-size:12.5px;line-height:12.5px;color:#000080;font-weight:bold;font-style:normal;transform:scaleX(0.963435867672664);">Área de visualização dos resultados</div>
<div class="b" style="left:603px;top:354px;width:406px;height:141px;background:#f0f0f0;border-left:2px solid #c8c8c8;border-right:2px solid #d0d0d0;border-bottom:2px solid #c8c8c8"></div>
<div class="b" style="left:605px;top:354px;width:392px;height:1px;background:#505050"></div>
<div class="b" style="left:605px;top:354px;width:1px;height:139px;background:#8c8c8c"></div>
<div class="b" style="left:606px;top:355px;width:391px;height:128px;background:#fff"></div>
<svg style="left:999px;top:359px" width="6" height="4" viewBox="0 0 6 4"><path d="M0.5 3.5L3 1l2.5 2.5" stroke="#b8b8b8" stroke-width="1.1" fill="none"/></svg>
<svg style="left:999px;top:474px" width="6" height="4" viewBox="0 0 6 4"><path d="M0.5 0.5L3 3l2.5-2.5" stroke="#b8b8b8" stroke-width="1.1" fill="none"/></svg>
<svg style="left:609px;top:485px" width="4" height="6" viewBox="0 0 4 6"><path d="M3.5 0.5L1 3l2.5 2.5" stroke="#b8b8b8" stroke-width="1.1" fill="none"/></svg>
<svg style="left:990px;top:485px" width="4" height="6" viewBox="0 0 4 6"><path d="M0.5 0.5L3 3l-2.5 2.5" stroke="#b8b8b8" stroke-width="1.1" fill="none"/></svg>
<div class="b" style="left:0px;top:582px;width:1024px;height:33px;background:#e8e8e8"></div>
<div class="b" style="left:1px;top:582px;width:1023px;height:33px;background:#c0dcc0;border-top:1px solid #f4faf4"></div>
<div class="b" style="left:1px;top:583px;width:1023px;height:1px;background:#dcecdc"></div>
<div class="b" style="left:1px;top:584px;width:1023px;height:1px;background:#aec4ae"></div>
<div class="b" style="left:55px;top:585px;width:1px;height:30px;background:#f0f8f0"></div>
<div class="b" style="left:56.5px;top:585px;width:1.2px;height:30px;background:#a0b4a0"></div>
<div class="b" style="left:122px;top:585px;width:1px;height:30px;background:#f0f8f0"></div>
<div class="b" style="left:123.5px;top:585px;width:1.2px;height:30px;background:#a0b4a0"></div>
<div class="b" style="left:402px;top:585px;width:1px;height:30px;background:#f0f8f0"></div>
<div class="b" style="left:403.5px;top:585px;width:1.2px;height:30px;background:#a0b4a0"></div>
<div class="t" style="left:1px;top:595.76px;font-family:'Liberation Sans', sans-serif;font-size:9.5px;line-height:9.5px;color:#111;font-weight:normal;font-style:normal;transform:scaleX(0.8819923812971542);">0000009:0001</div>
<div class="t" style="left:58px;top:595.76px;font-family:'Liberation Sans', sans-serif;font-size:9.5px;line-height:9.5px;color:#111;font-weight:normal;font-style:normal;transform:scaleX(0.9279192339098806);">Status</div>
<div style="position:absolute;left:122px;top:584px;width:280px;height:31px;overflow:hidden">
<div class="t" style="left:6px;top:11.76px;font-family:'Liberation Sans', sans-serif;font-size:9.5px;line-height:9.5px;color:#111;font-weight:normal;font-style:normal;transform:scaleX(0.9491811171210687);">Use as setas (&lt;- ou -&gt;) &lt;&lt;Ctrl J&gt;&gt; p/ LISTA dos(Comandos/Funções)</div>
</div>
<div class="t" style="left:408px;top:595.76px;font-family:'Liberation Sans', sans-serif;font-size:9.5px;line-height:9.5px;color:#111;font-weight:normal;font-style:normal;transform:scaleX(0.9543529993509906);">MENSAGEM: Mostra o resultado final de um programa escrito em visualG depois de finalizado !</div>
</body></html>
